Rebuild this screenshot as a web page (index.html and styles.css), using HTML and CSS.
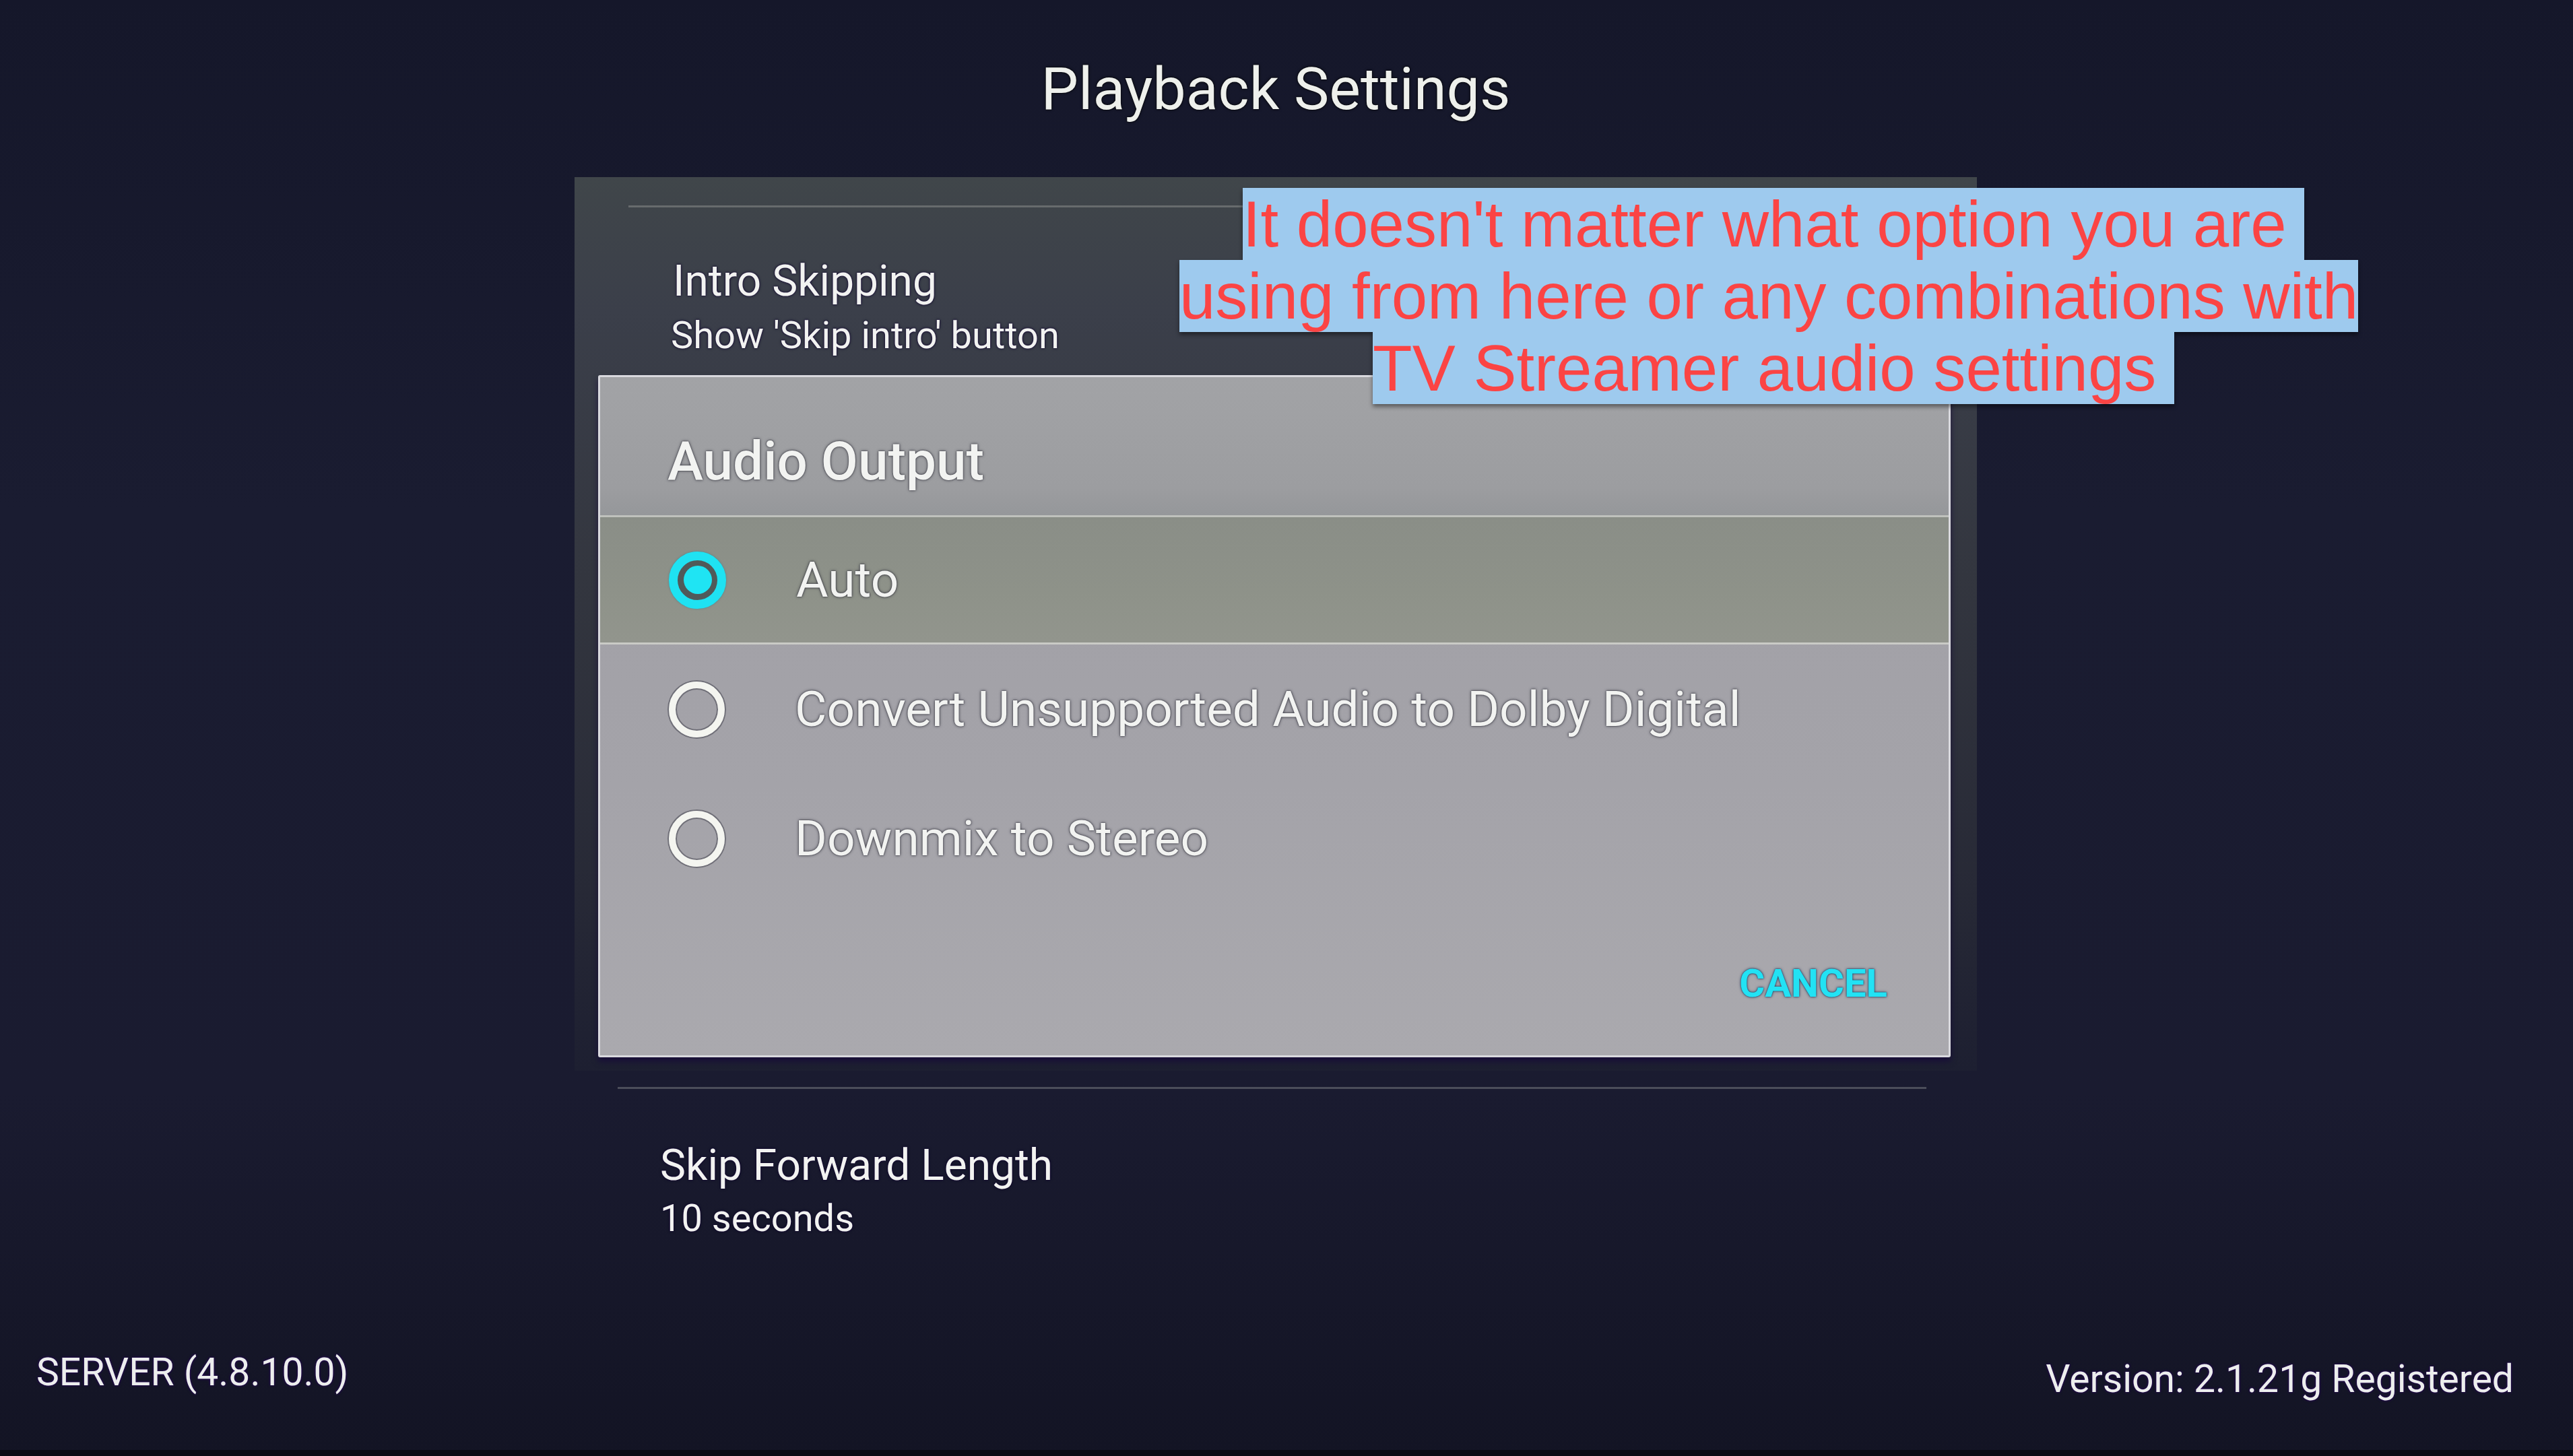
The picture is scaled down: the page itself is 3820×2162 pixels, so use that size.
FILE: index.html
```html
<!DOCTYPE html>
<html lang="en">
<head>
    <meta charset="UTF-8">
    <meta name="viewport" content="width=device-width, initial-scale=1.0">
    <title>Playback Settings</title>
    <link rel="stylesheet" href="styles.css">
</head>
<body>
    <div class="screen">
        <div class="main">
            <h1 class="title">Playback Settings</h1>

            <div class="list">
                <div class="row focused">
                    <div class="divider"></div>
                    <div class="row-title">Intro Skipping</div>
                    <div class="row-sub">Show 'Skip intro' button</div>
                </div>
                <div class="divider lower"></div>
                <div class="row plain">
                    <div class="row-title">Skip Forward Length</div>
                    <div class="row-sub">10 seconds</div>
                </div>
            </div>
        </div>

        <div class="footer">
            <span class="server">SERVER (4.8.10.0)</span>
            <span class="version">Version: 2.1.21g Registered</span>
        </div>

        <!-- modal picker shown over the settings list -->
        <div class="dialog">
            <div class="dialog-head">Audio Output</div>
            <div class="option selected">
                <span class="radio on"></span>
                <span class="option-label">Auto</span>
            </div>
            <div class="option">
                <span class="radio"></span>
                <span class="option-label">Convert Unsupported Audio to Dolby Digital</span>
            </div>
            <div class="option">
                <span class="radio"></span>
                <span class="option-label">Downmix to Stereo</span>
            </div>
            <div class="dialog-actions">
                <span class="btn-cancel">CANCEL</span>
            </div>
        </div>

        <div class="note">
            <span class="nudge">It doesn't matter what option you are </span>
            <span>using from here or any combinations with</span>
            <span class="nudge">TV Streamer audio settings </span>
        </div>
    </div>
</body>
</html>
```

FILE: styles.css
```css
body {
    margin: 0;
    background: #171929;
    font-family: Roboto, "Noto Sans", sans-serif;
    color: #f2f3f1;
}
.screen {
    position: relative;
    width: 3820px;
    height: 2162px;
    display: flex;
    flex-direction: column;
    overflow: hidden;
    background: linear-gradient(180deg, #15172a 0%, #1a1c31 35%, #1a1b30 75%, #131424 100%);
    box-shadow: inset 0 -9px 0 #0c0d15;
}
.main {
    margin-left: 853px;
    width: 2082px;
}
.title {
    margin: 0;
    padding-top: 88px;
    font-size: 88px;
    line-height: 88px;
    font-weight: 400;
    text-align: center;
    color: #eef0ec;
    text-shadow: 0 0 2px #000, 0 0 4px rgba(0, 0, 0, 0.7);
}
.list {
    margin-top: 87px;
}
.row.focused {
    height: 1327px;
    box-sizing: border-box;
    padding-top: 42px;
    background: linear-gradient(180deg, #40464a 0%, #3b3f4a 15%, #33363f 45%, #272936 80%, #1d1f31 100%);
}
.divider {
    height: 3px;
    margin: 0 75px 0 80px;
    background: #676b6d;
}
.divider.lower {
    margin: 24px 75px 0 64px;
    background: #4b4d5a;
}
.row-title {
    font-size: 64px;
    line-height: 64px;
    text-shadow: 0 0 2px #1a0838, 0 0 4px rgba(10, 0, 40, 0.8);
}
.row-sub {
    margin-top: 20px;
    font-size: 56px;
    line-height: 56px;
    text-shadow: 0 0 2px #1a0838, 0 0 4px rgba(10, 0, 40, 0.8);
}
.focused .row-title {
    margin-top: 78px;
    padding-left: 146px;
}
.focused .row-sub {
    padding-left: 143px;
}
.plain {
    padding-left: 127px;
}
.plain .row-title {
    margin-top: 82px;
}
.plain .row-sub {
    margin-top: 18px;
}

.footer {
    margin-top: auto;
    display: flex;
    justify-content: space-between;
    align-items: flex-start;
    padding: 0 88px 86px 54px;
    font-size: 57px;
    line-height: 57px;
    color: #eceeed;
    text-shadow: 0 0 2px #2a0860, 0 0 4px rgba(40, 0, 90, 0.8);
}
.version {
    margin-top: 10px;
}

/* dialog */
.dialog {
    position: absolute;
    left: 888px;
    top: 557px;
    width: 2008px;
    height: 1013px;
    box-sizing: border-box;
    border: 3px solid #d9d9de;
    border-radius: 3px;
    background: linear-gradient(180deg, #a09fa5 0%, #a4a3a9 60%, #aaa9ae 100%);
    box-shadow: 0 6px 10px rgba(20, 0, 60, 0.6);
}
.dialog-head {
    height: 205px;
    box-sizing: border-box;
    padding: 85px 0 0 100px;
    font-size: 80px;
    line-height: 80px;
    font-weight: 500;
    background: linear-gradient(180deg, #a2a3a6 0%, #9c9da0 80%, #95979a 100%);
    text-shadow: 0 0 2px #3a3a44, 0 0 4px rgba(40, 40, 50, 0.8);
}
.option {
    height: 192px;
    box-sizing: border-box;
    display: flex;
    align-items: center;
    padding-left: 102px;
}
.option.selected {
    background: linear-gradient(180deg, #8a8e87 0%, #8e9289 60%, #92958d 100%);
    border-top: 3px solid #bfc1bc;
    border-bottom: 3px solid #c9cac6;
}
.option-label {
    margin-left: 104px;
    font-size: 73px;
    line-height: 73px;
    text-shadow: 0 0 2px #3a3a44, 0 0 4px rgba(40, 40, 50, 0.85);
}
.radio {
    width: 83px;
    height: 83px;
    box-sizing: border-box;
    border: 10px solid #f4f5f0;
    border-radius: 50%;
    box-shadow: 0 0 0 2px rgba(70, 70, 80, 0.55), inset 0 0 0 2px rgba(70, 70, 80, 0.55);
}
.radio.on {
    width: 85px;
    height: 85px;
    border: 13px solid #1fe2f2;
    background: #505a5a;
    display: flex;
    align-items: center;
    justify-content: center;
    box-shadow: 0 0 3px rgba(30, 120, 140, 0.6);
}
.radio.on::after {
    content: "";
    width: 42px;
    height: 42px;
    border-radius: 50%;
    background: #1fe4f3;
}
.dialog-actions {
    display: flex;
    justify-content: flex-end;
    padding: 90px 91px 0 0;
}
.btn-cancel {
    font-size: 58px;
    line-height: 58px;
    font-weight: 700;
    color: #22e2f4;
    text-shadow: 0 0 2px #1e3c5a, 0 0 4px rgba(20, 50, 90, 0.8);
}

/* red callout pasted on top of the capture */
.note {
    position: absolute;
    left: 1747px;
    top: 279px;
    width: 1758px;
    display: flex;
    flex-direction: column;
    align-items: center;
    font-family: "Liberation Sans", Arial, sans-serif;
    font-size: 96px;
    line-height: 107px;
    color: #fb4444;
    white-space: pre;
    filter: drop-shadow(0 4px 3px rgba(0, 0, 0, 0.45));
}
.note span {
    display: block;
    background: #9ecaee;
}
.note .nudge {
    margin-left: 14px;
}
```
